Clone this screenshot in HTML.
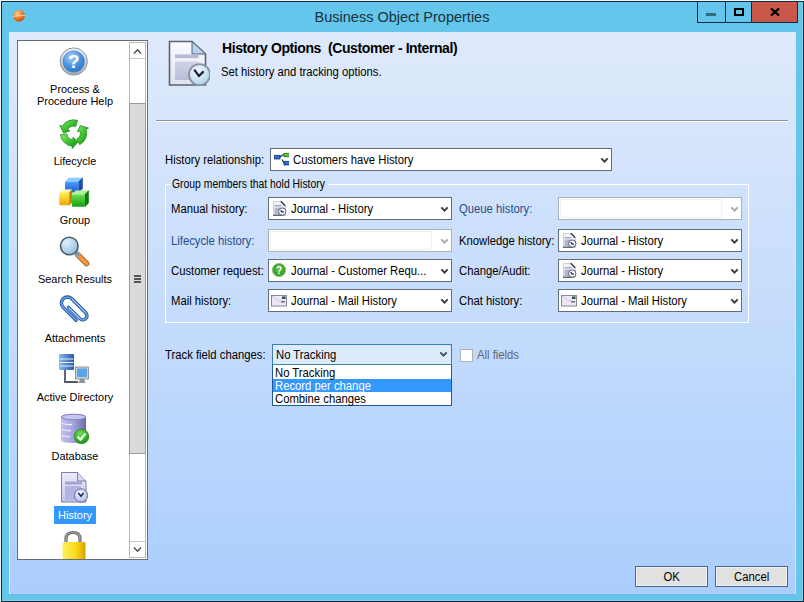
<!DOCTYPE html>
<html><head><meta charset="utf-8">
<style>
*{margin:0;padding:0;box-sizing:border-box}
html,body{width:804px;height:602px;overflow:hidden;background:#f4f4f4}
body{position:relative;font-family:"Liberation Sans",sans-serif;font-size:11px;color:#000}
.a{position:absolute}
.t{position:absolute;white-space:nowrap;line-height:13px;font-size:12px;transform:scaleX(.94);transform-origin:0 0;margin-top:1px}
.hb{position:absolute;white-space:nowrap}
#win{left:1px;top:1px;width:803px;height:601px;background:#63c6ea;border:1px solid #0c2b44;box-shadow:inset -1px -1px 0 #86cce6}
#content{left:9px;top:32px;width:787px;height:562px;background:linear-gradient(#dfeafb,#abcefd)}
#title{left:0;top:8px;width:804px;text-align:center;font-size:14.5px;color:#1c2f3e;line-height:18px}
.lbl{position:absolute;white-space:nowrap;line-height:13px;font-size:12px;transform:scaleX(.94);transform-origin:0 0;margin-top:1px}
.blue{color:#1f4d8c}
.li{position:absolute;left:18px;width:114px;text-align:center;font-size:11.5px;line-height:12px;white-space:nowrap;transform:scaleX(.95);transform-origin:50% 0}
.btn{position:absolute;top:566px;width:73px;height:21px;border:1px solid #4b6a8b;background:#e1e1e1;box-shadow:inset 0 0 0 1px #f0f0f0;text-align:center;line-height:21px}
</style></head><body>
<div id="win" class="a"></div>
<!-- title bar -->
<svg class="a" style="left:11px;top:8px" width="16" height="16" viewBox="0 0 16 16">
 <defs><radialGradient id="og" cx="0.38" cy="0.3" r="0.75"><stop offset="0" stop-color="#ffd080"/><stop offset="0.45" stop-color="#f08a30"/><stop offset="1" stop-color="#c04a10"/></radialGradient></defs>
 <circle cx="8" cy="7.8" r="5.9" fill="url(#og)"/>
 <path d="M1.5 8.4 Q8 7.2 14.5 7.6" fill="none" stroke="#ffe8d0" stroke-width="1" opacity="0.75"/>
</svg>
<div id="title" class="a">Business Object Properties</div>
<!-- title buttons -->
<div class="a" style="left:697px;top:2px;width:101px;height:21px;border:1px solid #0c2b44;border-top:none;background:#63c6ea"></div>
<div class="a" style="left:725px;top:1px;width:1px;height:22px;background:#0c2b44"></div>
<div class="a" style="left:751px;top:2px;width:47px;height:21px;background:#c9584a;border:1px solid #0c2b44;border-top:none"></div>
<div class="a" style="left:706px;top:13px;width:10px;height:3px;background:#2d6b80"></div>
<div class="a" style="left:734px;top:8px;width:10px;height:8px;border:2px solid #000"></div>
<svg class="a" style="left:770px;top:8px" width="10" height="8" viewBox="0 0 10 8"><path d="M1 0.5 L9 7.5 M9 0.5 L1 7.5" stroke="#000" stroke-width="2.3"/></svg>

<div id="content" class="a"></div>
<div class="a" style="left:9px;top:594px;width:787px;height:1px;background:#74b6da"></div>
<div class="a" style="left:795px;top:32px;width:1px;height:562px;background:#c6eefc"></div>
<div class="a" style="left:9px;top:32px;width:1px;height:562px;background:#d4f2fc"></div>

<!-- list box -->
<div class="a" style="left:17px;top:40px;width:131px;height:520px;background:#fff;border:1px solid #686d74"></div>
<!-- scrollbar -->
<div class="a" style="left:129px;top:42px;width:17px;height:516px;border:1px solid #b9b9b9;background:#fff"></div>
<div class="a" style="left:130px;top:58px;width:15px;height:1px;background:#c8c8c8"></div>
<div class="a" style="left:130px;top:541px;width:15px;height:1px;background:#c8c8c8"></div>
<div class="a" style="left:129px;top:103px;width:17px;height:351px;background:#dadada;border:1px solid #9a9a9a"></div>
<svg class="a" style="left:133px;top:48px" width="9" height="7" viewBox="0 0 9 7"><path d="M1 5.5 L4.5 1.8 L8 5.5" fill="none" stroke="#505050" stroke-width="1.5"/></svg>
<svg class="a" style="left:133px;top:546px" width="9" height="7" viewBox="0 0 9 7"><path d="M1 1.5 L4.5 5.2 L8 1.5" fill="none" stroke="#505050" stroke-width="1.5"/></svg>
<div class="a" style="left:134px;top:275px;width:7px;height:2px;background:#555"></div>
<div class="a" style="left:134px;top:278px;width:7px;height:2px;background:#555"></div>
<div class="a" style="left:134px;top:281px;width:7px;height:2px;background:#555"></div>

<svg class="a" style="left:58px;top:46px" width="32" height="32" viewBox="0 0 32 32"><defs><radialGradient id="hg" cx="0.4" cy="0.3" r="0.8"><stop offset="0" stop-color="#a8d4f8"/><stop offset="0.55" stop-color="#4a92e0"/><stop offset="1" stop-color="#2a6cc4"/></radialGradient>
<linearGradient id="hr" x1="0" y1="0" x2="0" y2="1"><stop offset="0" stop-color="#f4f6f8"/><stop offset="1" stop-color="#a8b0b8"/></linearGradient></defs>
<circle cx="15.7" cy="15.5" r="13.6" fill="url(#hr)" stroke="#8a9098" stroke-width="1"/>
<circle cx="15.7" cy="15.5" r="10.8" fill="url(#hg)" stroke="#5a8ac0" stroke-width="0.6"/>
<text x="15.9" y="22" font-family="Liberation Sans" font-weight="bold" font-size="19" fill="#fff" text-anchor="middle">?</text></svg>
<div class="li" style="top:83px">Process &amp;<br>Procedure Help</div>
<svg class="a" style="left:58px;top:117px" width="32" height="32" viewBox="0 0 32 32"><defs><linearGradient id="lg" x1="0" y1="0" x2="1" y2="1"><stop offset="0" stop-color="#8af070"/><stop offset="0.5" stop-color="#3cc030"/><stop offset="1" stop-color="#12900e"/></linearGradient></defs>
<g fill="url(#lg)" stroke="#1f8a18" stroke-width="0.8" stroke-linejoin="round"><path d="M19.58 3.45 A13.2 13.2 0 0 0 4.07 9.40 L1.82 8.10 L5.50 16.00 L11.86 13.90 L9.61 12.60 A6.8 6.8 0 0 1 17.60 9.53 Z"/><path d="M21.70 27.65 A13.2 13.2 0 0 0 28.05 11.92 L30.53 11.12 L22.19 8.57 L19.49 14.70 L21.97 13.90 A6.8 6.8 0 0 1 18.69 22.00 Z"/><path d="M2.43 17.84 A13.2 13.2 0 0 0 14.35 29.15 L14.12 31.74 L19.73 25.06 L15.13 20.18 L14.91 22.77 A6.8 6.8 0 0 1 8.77 16.95 Z"/></g></svg>
<div class="li" style="top:155px">Lifecycle</div>
<svg class="a" style="left:58px;top:176px" width="32" height="32" viewBox="0 0 32 32"><linearGradient id="gb" x1="0" y1="0" x2="0" y2="1"><stop offset="0" stop-color="#4aa0ff"/><stop offset="1" stop-color="#1a5cd0"/></linearGradient>
<path d="M7 5.8 L10.8 2 H24.5 L20.6 5.8Z" fill="#90ccff" stroke="#90ccff" stroke-width="0.6" stroke-linejoin="round"/>
<path d="M20.6 5.8 L24.5 2 V12.7 L20.6 16.5Z" fill="#1a4cb0" stroke="#1a4cb0" stroke-width="0.6" stroke-linejoin="round"/>
<rect x="7" y="5.8" width="13.6" height="10.7" rx="1" fill="url(#gb)"/><linearGradient id="gy" x1="0" y1="0" x2="0" y2="1"><stop offset="0" stop-color="#fff050"/><stop offset="1" stop-color="#e8a800"/></linearGradient>
<path d="M1.3 16.6 L4.1 13.8 H14 L11.2 16.6Z" fill="#fff8b0" stroke="#fff8b0" stroke-width="0.6" stroke-linejoin="round"/>
<path d="M11.2 16.6 L14 13.8 V26.5 L11.2 29.3Z" fill="#c08800" stroke="#c08800" stroke-width="0.6" stroke-linejoin="round"/>
<rect x="1.3" y="16.6" width="9.9" height="12.7" rx="1" fill="url(#gy)"/><linearGradient id="gg" x1="0" y1="0" x2="0" y2="1"><stop offset="0" stop-color="#6ae050"/><stop offset="1" stop-color="#16a012"/></linearGradient>
<path d="M14 18.4 L17.7 14.7 H30.6 L26.9 18.4Z" fill="#b0f4a0" stroke="#b0f4a0" stroke-width="0.6" stroke-linejoin="round"/>
<path d="M26.9 18.4 L30.6 14.7 V27.0 L26.9 30.7Z" fill="#0c7a0a" stroke="#0c7a0a" stroke-width="0.6" stroke-linejoin="round"/>
<rect x="14" y="18.4" width="12.9" height="12.3" rx="1" fill="url(#gg)"/></svg>
<div class="li" style="top:214px">Group</div>
<svg class="a" style="left:58px;top:235px" width="32" height="32" viewBox="0 0 32 32"><defs><radialGradient id="sg" cx="0.35" cy="0.3" r="0.8"><stop offset="0" stop-color="#e0f0fa"/><stop offset="1" stop-color="#8cbcdc"/></radialGradient></defs>
<path d="M19.5 19.5 L28.5 28.5" stroke="#b06020" stroke-width="5.6" stroke-linecap="round"/>
<path d="M19.5 19.5 L28.5 28.5" stroke="#f09a48" stroke-width="3.6" stroke-linecap="round"/>
<path d="M18 18 L21 21" stroke="#909aa4" stroke-width="5"/>
<circle cx="11.3" cy="11" r="8.8" fill="url(#sg)" stroke="#4c5e6c" stroke-width="1.6"/></svg>
<div class="li" style="top:273px">Search Results</div>
<svg class="a" style="left:58px;top:294px" width="32" height="32" viewBox="0 0 32 32"><g transform="translate(16.2 15.8) rotate(-45) scale(0.76) translate(-11 -21.5)" fill="none" stroke-linecap="round">
<path d="M8 14 V35 A5.5 5.5 0 0 0 19 35 V9 A8 8 0 0 0 3 9 V33" stroke="#1d4f9c" stroke-width="4.4"/>
<path d="M8 14 V35 A5.5 5.5 0 0 0 19 35 V9 A8 8 0 0 0 3 9 V33" stroke="#6aa4e8" stroke-width="2.2"/>
<path d="M8 16 V34 M19 34 V10" stroke="#e8f2ff" stroke-width="0.9"/>
</g></svg>
<div class="li" style="top:332px">Attachments</div>
<svg class="a" style="left:58px;top:353px" width="32" height="32" viewBox="0 0 32 32"><defs><linearGradient id="ab" x1="0" y1="0" x2="1" y2="0"><stop offset="0" stop-color="#8ab8f0"/><stop offset="1" stop-color="#2858a8"/></linearGradient></defs>
<path d="M7 17 V29 H20" fill="none" stroke="#505860" stroke-width="1.8"/>
<rect x="1" y="1" width="15" height="16" rx="1" fill="url(#ab)"/>
<path d="M1.5 6 H15.5 M1.5 9.5 H15.5 M1.5 13 H15.5" stroke="#e0ecff" stroke-width="1.2"/>
<rect x="17.5" y="14" width="13" height="12" fill="#c8d0d8" stroke="#7a8490" stroke-width="0.8"/>
<rect x="19" y="15.5" width="10" height="8.5" fill="#5aa4e8"/>
<path d="M22 26 H26 L27.5 30 H20.5Z" fill="#8a949e"/></svg>
<div class="li" style="top:391px">Active Directory</div>
<svg class="a" style="left:58px;top:412px" width="32" height="32" viewBox="0 0 32 32"><defs><linearGradient id="dg" x1="0" y1="0" x2="1" y2="0"><stop offset="0" stop-color="#c0c0ec"/><stop offset="0.5" stop-color="#a4a4dc"/><stop offset="1" stop-color="#6a6aa8"/></linearGradient>
<radialGradient id="cg" cx="0.4" cy="0.3" r="0.8"><stop offset="0" stop-color="#6ee050"/><stop offset="1" stop-color="#128a10"/></radialGradient></defs>
<path d="M3 5 Q3 2 15.5 2 Q28 2 28 5 V28 Q28 31 15.5 31 Q3 31 3 28Z" fill="url(#dg)"/>
<ellipse cx="15.5" cy="5" rx="12.3" ry="2.8" fill="#c4c4ee" stroke="#7c7cb4" stroke-width="0.9"/>
<path d="M4 11.5 Q9 13 14 12.5 M4 17.5 Q9 19 13 18.5 M4 23.5 Q9 25 12 24.5" fill="none" stroke="#eeeeff" stroke-width="1.3"/>
<circle cx="23.5" cy="24.5" r="7.3" fill="url(#cg)" stroke="#1a7a14" stroke-width="0.6"/>
<path d="M19.5 24.5 L22.5 27.5 L27.5 21.5" fill="none" stroke="#f0fff0" stroke-width="2.4"/></svg>
<div class="li" style="top:450px">Database</div>
<svg class="a" style="left:58px;top:471px" width="32" height="32" viewBox="0 0 32 32"><defs><linearGradient id="hd" x1="0" y1="0" x2="0" y2="1"><stop offset="0" stop-color="#ececfc"/><stop offset="1" stop-color="#c4c4ec"/></linearGradient>
<radialGradient id="hc" cx="0.4" cy="0.3" r="0.8"><stop offset="0" stop-color="#eef4ff"/><stop offset="1" stop-color="#a8bce8"/></radialGradient></defs>
<path d="M3.5 1.5 H19.5 L28 10 V31 H3.5 Z" fill="url(#hd)" stroke="#7c7cb0" stroke-width="1"/>
<path d="M19.5 1.5 V10 H28" fill="#d8d8f4" stroke="#7c7cb0" stroke-width="1"/>
<rect x="7" y="10.5" width="17" height="3" fill="#a4a4cc"/>
<rect x="7" y="15" width="16" height="14" fill="#b4b4e4"/>
<circle cx="23" cy="24.5" r="6.6" fill="url(#hc)" stroke="#6a6a9a" stroke-width="1"/>
<path d="M20.3 22 L23 25.2 L25.5 22" fill="none" stroke="#1a2a50" stroke-width="1.6"/></svg>
<div class="a" style="left:54px;top:506px;width:42px;height:18px;background:#3399ff"></div>
<div class="li" style="top:509px;color:#fff">History</div>
<div class="a" style="left:18px;top:526px;width:111px;height:33px;overflow:hidden"><svg class="a" style="left:40px;top:4px" width="32" height="32" viewBox="0 0 32 32"><defs><linearGradient id="ly" x1="0" y1="0" x2="1" y2="0"><stop offset="0" stop-color="#fff060"/><stop offset="0.6" stop-color="#f8d818"/><stop offset="1" stop-color="#d8a000"/></linearGradient></defs>
<path d="M8 13 V9 Q8 2.5 15 2.5 Q22 2.5 22 9 V13" fill="none" stroke="#6a6a6a" stroke-width="3.2"/>
<path d="M8 13 V9 Q8 2.5 15 2.5 Q22 2.5 22 9 V13" fill="none" stroke="#a8a8b0" stroke-width="1.2"/>
<rect x="4.5" y="12" width="23" height="20" rx="1.5" fill="url(#ly)"/></svg></div>

<!-- header -->
<svg class="a" style="left:166px;top:38px" width="44" height="50" viewBox="0 0 44 50">
<defs><linearGradient id="dd" x1="0" y1="0" x2="0" y2="1"><stop offset="0" stop-color="#fbfbff"/><stop offset="1" stop-color="#dfe2f0"/></linearGradient>
<radialGradient id="dc" cx="0.4" cy="0.3" r="0.8"><stop offset="0" stop-color="#f2f8fe"/><stop offset="1" stop-color="#a9d0ec"/></radialGradient>
<linearGradient id="db2" x1="0" y1="0" x2="0" y2="1"><stop offset="0" stop-color="#d0d4ea"/><stop offset="1" stop-color="#b8bcd8"/></linearGradient></defs>
<path d="M3.5 3.5 H26 L39.5 16 V47 H3.5 Z" fill="url(#dd)" stroke="#5c6272" stroke-width="1.6"/>
<path d="M26 3.5 V16 H39.5 Z" fill="#b4d4ec" stroke="#5c6272" stroke-width="1"/>
<rect x="9" y="16.5" width="23.5" height="3.6" fill="#b6b8d8"/>
<rect x="9" y="23.5" width="23.5" height="18.5" fill="url(#db2)"/>
<circle cx="33.5" cy="36.6" r="10.5" fill="url(#dc)" stroke="#8a929c" stroke-width="1.8"/>
<path d="M28.2 31.6 L33 38 L37.6 33.4" fill="none" stroke="#1a2438" stroke-width="2.3" stroke-linejoin="round"/>
</svg>
<div class="hb" style="left:222px;top:40px;font-weight:bold;font-size:14px;letter-spacing:-0.4px;line-height:16px">History Options&nbsp; (Customer - Internal)</div>
<div class="t" style="left:221px;top:65px">Set history and tracking options.</div>
<div class="a" style="left:156px;top:120px;width:632px;height:1px;background:#8c96a0"></div>
<div class="a" style="left:156px;top:121px;width:632px;height:1px;background:#fff"></div>

<!-- form -->
<div class="lbl" style="left:165px;top:153px">History relationship:</div>

<!-- group box -->
<div class="a" style="left:165px;top:184px;width:1px;height:139px;background:#fff"></div>
<div class="a" style="left:748px;top:184px;width:1px;height:139px;background:#fff"></div>
<div class="a" style="left:165px;top:322px;width:584px;height:1px;background:#fff"></div>
<div class="a" style="left:165px;top:184px;width:6px;height:1px;background:#fff"></div>
<div class="a" style="left:328px;top:184px;width:421px;height:1px;background:#fff"></div>
<div class="lbl" style="left:172px;top:177px;transform:scaleX(.865)">Group members that hold History</div>

<div class="lbl" style="left:171px;top:202px">Manual history:</div>
<div class="lbl blue" style="left:171px;top:234px">Lifecycle history:</div>
<div class="lbl" style="left:171px;top:264px">Customer request:</div>
<div class="lbl" style="left:171px;top:294px">Mail history:</div>
<div class="lbl blue" style="left:459px;top:202px">Queue history:</div>
<div class="lbl" style="left:459px;top:234px">Knowledge history:</div>
<div class="lbl" style="left:459px;top:264px">Change/Audit:</div>
<div class="lbl" style="left:459px;top:294px">Chat history:</div>

<div class="a" style="left:270px;top:148px;width:342px;height:23px;background:#fff;border:1px solid #646d76"></div><svg class="a" style="left:600px;top:157px" width="9" height="7" viewBox="0 0 9 7"><path d="M1.3 1.4 L4.5 4.6 L7.7 1.4" fill="none" stroke="#3c3c3c" stroke-width="2"/></svg><svg class="a" style="left:273px;top:151px" width="16" height="16" viewBox="0 0 16 16"><rect x="1.5" y="4.3" width="5.5" height="3.7" fill="#2d6ad0" stroke="#123c80" stroke-width="0.8"/>
   <rect x="11" y="2.3" width="5.5" height="3.5" fill="#5cc840" stroke="#1e6a1a" stroke-width="0.8"/>
   <rect x="11" y="10.3" width="5.5" height="3.7" fill="#2d6ad0" stroke="#123c80" stroke-width="0.8"/>
   <path d="M7 6 L9.5 4 H11 M9 8.5 L11 12" fill="none" stroke="#1a2a3a" stroke-width="1.1"/></svg><div class="t" style="left:293px;top:153px">Customers have History</div>
<div class="a" style="left:268px;top:197px;width:184px;height:23px;background:#fff;border:1px solid #646d76"></div><svg class="a" style="left:440px;top:206px" width="9" height="7" viewBox="0 0 9 7"><path d="M1.3 1.4 L4.5 4.6 L7.7 1.4" fill="none" stroke="#3c3c3c" stroke-width="2"/></svg><svg class="a" style="left:271px;top:200px" width="16" height="16" viewBox="0 0 16 16"><path d="M2.5 1.5 H10 L14.5 6 V15.5 H2.5 Z" fill="#f2f3f8" stroke="#c0c4cc" stroke-width="0.8"/>
   <path d="M9.8 1.3 L14.2 5.7" stroke="#2a3240" stroke-width="1.3"/>
   <rect x="3.5" y="5" width="7" height="1.4" fill="#a0a8c0"/><rect x="3.5" y="7.5" width="6.5" height="7" fill="#b0b8d0"/>
   <path d="M2 15.3 H12.5" stroke="#5a6272" stroke-width="1.3"/>
   <circle cx="11.2" cy="11.6" r="3.7" fill="#f4f8fc" stroke="#5a6272" stroke-width="1"/>
   <path d="M9.6 10.4 L11.2 12 L12.8 12.2" fill="none" stroke="#0a1220" stroke-width="1.3"/></svg><div class="t" style="left:291px;top:202px">Journal - History</div>
<div class="a" style="left:268px;top:229px;width:184px;height:23px;background:#fff;border:1px solid #a9b0b8"></div><div class="a" style="left:270px;top:231px;width:162px;height:19px;border:1px solid #f0f0f0"></div><svg class="a" style="left:440px;top:238px" width="9" height="7" viewBox="0 0 9 7"><path d="M1.3 1.4 L4.5 4.6 L7.7 1.4" fill="none" stroke="#a8a8a8" stroke-width="2"/></svg>
<div class="a" style="left:268px;top:259px;width:184px;height:23px;background:#fff;border:1px solid #646d76"></div><svg class="a" style="left:440px;top:268px" width="9" height="7" viewBox="0 0 9 7"><path d="M1.3 1.4 L4.5 4.6 L7.7 1.4" fill="none" stroke="#3c3c3c" stroke-width="2"/></svg><svg class="a" style="left:271px;top:262px" width="16" height="16" viewBox="0 0 16 16"><circle cx="8" cy="8" r="6.6" fill="#3fa52a" stroke="#8cc080" stroke-width="1"/>
   <circle cx="8" cy="6.5" r="4" fill="#58c040" opacity="0.6"/>
   <text x="8" y="11.6" font-family="Liberation Sans" font-weight="bold" font-size="10" fill="#fff" text-anchor="middle">?</text></svg><div class="t" style="left:291px;top:264px">Journal - Customer Requ...</div>
<div class="a" style="left:268px;top:289px;width:184px;height:23px;background:#fff;border:1px solid #646d76"></div><svg class="a" style="left:440px;top:298px" width="9" height="7" viewBox="0 0 9 7"><path d="M1.3 1.4 L4.5 4.6 L7.7 1.4" fill="none" stroke="#3c3c3c" stroke-width="2"/></svg><svg class="a" style="left:271px;top:292px" width="16" height="16" viewBox="0 0 16 16"><rect x="0.5" y="3.5" width="15" height="10.5" fill="#ece6f6" stroke="#8a8a96" stroke-width="1"/>
   <path d="M1 4 L8 9 L15 4" fill="none" stroke="#c8c0d8" stroke-width="0.8"/>
   <rect x="11" y="4.5" width="3.5" height="2.5" fill="#2a5a40"/>
   <rect x="10" y="9" width="4" height="1.5" fill="#607080"/></svg><div class="t" style="left:291px;top:294px">Journal - Mail History</div>
<div class="a" style="left:558px;top:197px;width:184px;height:23px;background:#fff;border:1px solid #a9b0b8"></div><div class="a" style="left:560px;top:199px;width:162px;height:19px;border:1px solid #f0f0f0"></div><svg class="a" style="left:730px;top:206px" width="9" height="7" viewBox="0 0 9 7"><path d="M1.3 1.4 L4.5 4.6 L7.7 1.4" fill="none" stroke="#a8a8a8" stroke-width="2"/></svg>
<div class="a" style="left:558px;top:229px;width:184px;height:23px;background:#fff;border:1px solid #646d76"></div><svg class="a" style="left:730px;top:238px" width="9" height="7" viewBox="0 0 9 7"><path d="M1.3 1.4 L4.5 4.6 L7.7 1.4" fill="none" stroke="#3c3c3c" stroke-width="2"/></svg><svg class="a" style="left:561px;top:232px" width="16" height="16" viewBox="0 0 16 16"><path d="M2.5 1.5 H10 L14.5 6 V15.5 H2.5 Z" fill="#f2f3f8" stroke="#c0c4cc" stroke-width="0.8"/>
   <path d="M9.8 1.3 L14.2 5.7" stroke="#2a3240" stroke-width="1.3"/>
   <rect x="3.5" y="5" width="7" height="1.4" fill="#a0a8c0"/><rect x="3.5" y="7.5" width="6.5" height="7" fill="#b0b8d0"/>
   <path d="M2 15.3 H12.5" stroke="#5a6272" stroke-width="1.3"/>
   <circle cx="11.2" cy="11.6" r="3.7" fill="#f4f8fc" stroke="#5a6272" stroke-width="1"/>
   <path d="M9.6 10.4 L11.2 12 L12.8 12.2" fill="none" stroke="#0a1220" stroke-width="1.3"/></svg><div class="t" style="left:581px;top:234px">Journal - History</div>
<div class="a" style="left:558px;top:259px;width:184px;height:23px;background:#fff;border:1px solid #646d76"></div><svg class="a" style="left:730px;top:268px" width="9" height="7" viewBox="0 0 9 7"><path d="M1.3 1.4 L4.5 4.6 L7.7 1.4" fill="none" stroke="#3c3c3c" stroke-width="2"/></svg><svg class="a" style="left:561px;top:262px" width="16" height="16" viewBox="0 0 16 16"><path d="M2.5 1.5 H10 L14.5 6 V15.5 H2.5 Z" fill="#f2f3f8" stroke="#c0c4cc" stroke-width="0.8"/>
   <path d="M9.8 1.3 L14.2 5.7" stroke="#2a3240" stroke-width="1.3"/>
   <rect x="3.5" y="5" width="7" height="1.4" fill="#a0a8c0"/><rect x="3.5" y="7.5" width="6.5" height="7" fill="#b0b8d0"/>
   <path d="M2 15.3 H12.5" stroke="#5a6272" stroke-width="1.3"/>
   <circle cx="11.2" cy="11.6" r="3.7" fill="#f4f8fc" stroke="#5a6272" stroke-width="1"/>
   <path d="M9.6 10.4 L11.2 12 L12.8 12.2" fill="none" stroke="#0a1220" stroke-width="1.3"/></svg><div class="t" style="left:581px;top:264px">Journal - History</div>
<div class="a" style="left:558px;top:289px;width:184px;height:23px;background:#fff;border:1px solid #646d76"></div><svg class="a" style="left:730px;top:298px" width="9" height="7" viewBox="0 0 9 7"><path d="M1.3 1.4 L4.5 4.6 L7.7 1.4" fill="none" stroke="#3c3c3c" stroke-width="2"/></svg><svg class="a" style="left:561px;top:292px" width="16" height="16" viewBox="0 0 16 16"><rect x="0.5" y="3.5" width="15" height="10.5" fill="#ece6f6" stroke="#8a8a96" stroke-width="1"/>
   <path d="M1 4 L8 9 L15 4" fill="none" stroke="#c8c0d8" stroke-width="0.8"/>
   <rect x="11" y="4.5" width="3.5" height="2.5" fill="#2a5a40"/>
   <rect x="10" y="9" width="4" height="1.5" fill="#607080"/></svg><div class="t" style="left:581px;top:294px">Journal - Mail History</div>

<!-- track field changes -->
<div class="lbl" style="left:165px;top:348px">Track field changes:</div>
<div class="a" style="left:272px;top:344px;width:180px;height:21px;background:#dcecfc;border:1px solid #3c7fb1"></div>
<svg class="a" style="left:439px;top:351px" width="9" height="7" viewBox="0 0 9 7"><path d="M1.3 1.4 L4.5 4.6 L7.7 1.4" fill="none" stroke="#3c4f66" stroke-width="2"/></svg>
<div class="t" style="left:276px;top:348px">No Tracking</div>
<div class="a" style="left:272px;top:365px;width:180px;height:41px;background:#fff;border:1px solid #1e5a9a;border-top:none"></div>
<div class="a" style="left:273px;top:379px;width:178px;height:13px;background:#3399ff"></div>
<div class="t" style="left:275px;top:366px">No Tracking</div>
<div class="t" style="left:275px;top:379px;color:#fff">Record per change</div>
<div class="t" style="left:275px;top:392px">Combine changes</div>
<div class="a" style="left:460px;top:349px;width:13px;height:13px;background:#fff;border:1px solid #adb2b5"></div>
<div class="t" style="left:477px;top:348px;color:#5f6872">All fields</div>

<!-- buttons -->
<div class="btn" style="left:635px"><span style="display:inline-block;font-size:12px;transform:scaleX(.94)">OK</span></div>
<div class="btn" style="left:715px"><span style="display:inline-block;font-size:12px;transform:scaleX(.94)">Cancel</span></div>
</body></html>
